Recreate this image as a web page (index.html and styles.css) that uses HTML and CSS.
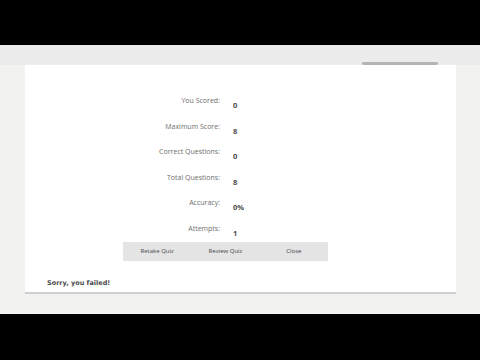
FILE: index.html
```html
<!DOCTYPE html>
<html lang="en">
<head>
  <meta charset="UTF-8" />
  <meta name="viewport" content="width=device-width, initial-scale=1.0"/>
  <title>Quiz Result</title>
  <link rel="stylesheet" href="styles.css">
</head>
<body>
  <div class="letterbox"></div>

  <div class="strip">
    <span class="strip-rule"></span>
  </div>

  <div class="page">
    <div class="card">
      <div class="stats">
        <div class="label">You Scored:</div><div class="value">0</div>
        <div class="label">Maximum Score:</div><div class="value">8</div>
        <div class="label">Correct Questions:</div><div class="value">0</div>
        <div class="label">Total Questions:</div><div class="value">8</div>
        <div class="label">Accuracy:</div><div class="value">0%</div>
        <div class="label">Attempts:</div><div class="value">1</div>
      </div>

      <div class="actions">
        <button type="button">Retake Quiz</button>
        <button type="button">Review Quiz</button>
        <button type="button">Close</button>
      </div>

      <p class="message">Sorry, you failed!</p>
    </div>
  </div>

  <div class="letterbox bottom"></div>
</body>
</html>
```

FILE: styles.css
```css
body {
  margin: 0;
  background-color: #f2f2ef;
  font-family: "Open Sans", Arial, sans-serif;
  color: #555;
}

.letterbox {
  height: 45px;
  background: #000;
}

.letterbox.bottom {
  height: 46px;
  margin-top: 20px;
}

.strip {
  height: 20px;
  background: #ececec;
  display: flex;
  justify-content: flex-end;
  align-items: flex-end;
  padding-right: 42px;
}

.strip-rule {
  width: 76px;
  height: 3px;
  background: #b4b4b4;
  border-radius: 2px 2px 3px 3px;
}

.page {
  padding: 0 24px 0 25px;
}

.card {
  background: white;
  height: 229px;
  border-bottom: 2px solid #cfcfcf;
  padding-top: 31px;
  box-sizing: border-box;
}

.stats {
  display: grid;
  grid-template-columns: 195px auto;
  grid-auto-rows: 25.6px;
  column-gap: 13px;
}

.label {
  text-align: right;
  font-size: 7px;
  color: #6e6e6e;
}

.value {
  font-size: 7.5px;
  font-weight: bold;
  color: #4a4a4a;
  margin-top: 4px;
}

.actions {
  display: flex;
  width: 205px;
  height: 19px;
  margin: -8px 0 0 98px;
  background: #e4e4e4;
}

.actions button {
  flex: 1;
  background: none;
  border: none;
  padding: 0;
  font-family: "Open Sans", Arial, sans-serif;
  font-size: 6px;
  color: #444;
}

.message {
  margin: 18px 0 0 22px;
  font-family: "DejaVu Sans", Verdana, sans-serif;
  font-size: 6.5px;
  font-weight: bold;
  color: #4a4a4a;
}
```
